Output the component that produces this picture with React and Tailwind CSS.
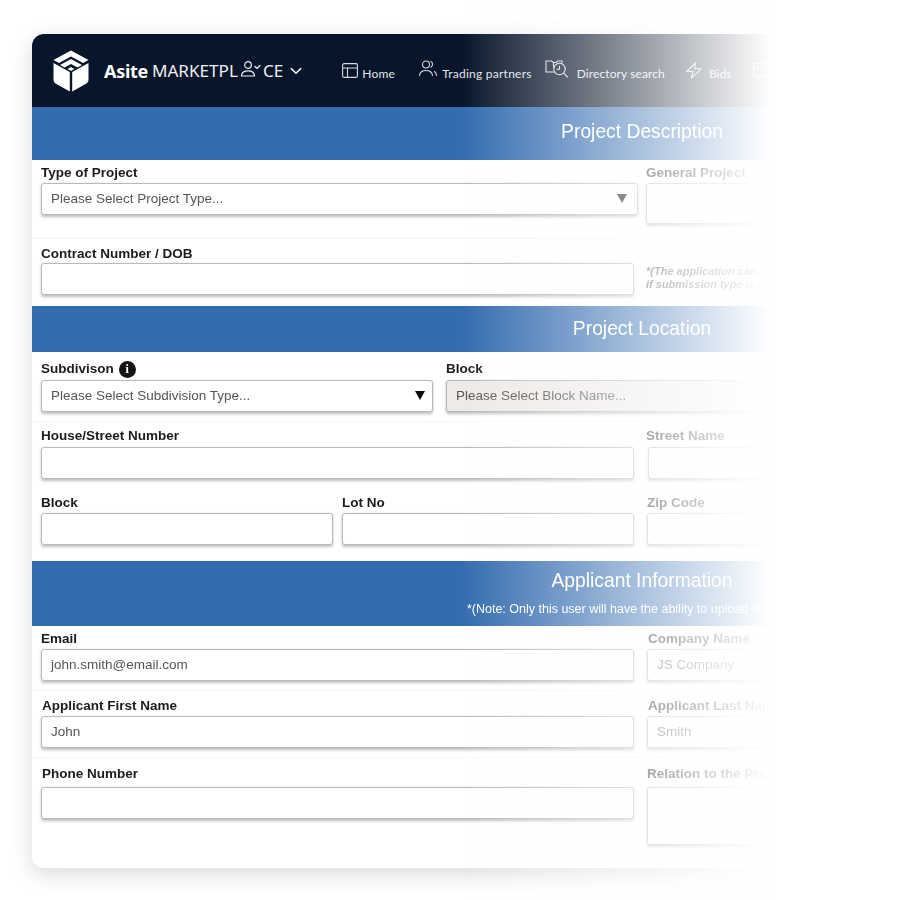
import React from "react";
import { ChevronDown } from "lucide-react";

const box = "border border-[#bababa] rounded-[3px] shadow-[0_1.5px_3px_rgba(0,0,0,0.26)] flex items-center pl-[9px] text-[13.5px] text-[#555] shrink-0";

function Label({ children, className = "" }) {
  return <div className={"h-4 leading-[18px] text-[13.5px] font-bold text-[#1c1c1c] whitespace-nowrap " + className}>{children}</div>;
}

function Field({ label, w, h = 32, gap = 3, value, arrow, extra = "bg-white", labelExtra = "", className = "" }) {
  return (
    <div className={"shrink-0 " + className} style={{ width: w }}>
      <Label className={labelExtra}>{label}</Label>
      <div className={box + " relative " + extra} style={{ height: h, marginTop: gap }}>
        {value}
        {arrow && <span className={"absolute top-[10px] w-0 h-0 border-l-[5.5px] border-r-[5.5px] border-t-[9px] border-l-transparent border-r-transparent border-t-[#0c0c0c] " + arrow} />}
      </div>
    </div>
  );
}

function Header({ h, title, note, top = 13 }) {
  return (
    <div className="bg-[#346cb0] text-white text-center flex flex-col items-center" style={{ height: h }}>
      <div className="text-[19.3px] leading-6" style={{ marginTop: top }}>{title}</div>
      {note && <div className="text-[12.5px] leading-4 mt-[8px]">{note}</div>}
    </div>
  );
}

function Logo() {
  return (
    <svg width="36" height="42" viewBox="0 0 36 42" className="shrink-0">
      <path d="M18 0.5 35.5 10 30 13 18 6.5 6 13 0.5 10Z" fill="#fff" />
      <path d="M18 9 29 15 24.5 17.5 18 14 11.500 17.500 7 15Z" fill="#fff" />
      <path d="M0.500 13 16.800 22V41.500L2.500 33.500Q0.500 32.500 0.500 30Z" fill="#fff" />
      <path d="M35.500 13 19.200 22V41.500L33.500 33.500Q35.500 32.500 35.500 30Z" fill="#fff" />
      <path d="M18 17 21.500 19 18 21 14.500 19Z" fill="#fff" />
    </svg>
  );
}

function HomeIcon() {
  return (
    <svg width="16" height="15" viewBox="0 0 16 15" fill="none" stroke="#d7dae0" strokeWidth="1.1">
      <rect x="0.600" y="0.600" width="14.800" height="13.800" rx="1.500" />
      <path d="M0.600 5H15.400M5.500 5V14.400" />
    </svg>
  );
}

function UsersIcon() {
  return (
    <svg width="20" height="20" viewBox="0 0 20 20" fill="none" stroke="#d7dae0" strokeWidth="1.1" strokeLinecap="round">
      <circle cx="8" cy="5.500" r="3.500" />
      <path d="M1.500 16.500C2 13 4.500 11.500 8 11.500S14 13 14.500 16.500" />
      <path d="M13 2.500C15 3.500 15 7 13 8.200" />
      <path d="M16.500 12.500C17.800 13.500 18.500 15 18.600 16.500" />
    </svg>
  );
}

function DirectoryIcon() {
  return (
    <svg width="25" height="20" viewBox="0 0 25 20" fill="none" stroke="#d7dae0" strokeWidth="1.1" strokeLinecap="round">
      <path d="M10 13H1V2H6.500L8.500 3.500H11" />
      <path d="M8.500 3.500V8" />
      <path d="M11 3.500 13 2H17V4" />
      <circle cx="14.500" cy="10" r="5.700" />
      <path d="M14.500 7V10.300H12" />
      <path d="M18.700 14.200 22.500 18" />
    </svg>
  );
}

function BoltIcon() {
  return (
    <svg width="16" height="17" viewBox="0 0 16 17" fill="none" stroke="#d7dae0" strokeWidth="1.1" strokeLinejoin="round">
      <path d="M9.500 0.800 0.800 9.500H7L5.500 16.200 15 6.800H8.500Z" />
    </svg>
  );
}

function DocIcon() {
  return (
    <svg width="16" height="16" viewBox="0 0 16 16" fill="none" stroke="#d7dae0" strokeWidth="1.1">
      <rect x="0.600" y="1.600" width="14.800" height="12.800" rx="1.500" />
      <path d="M0.600 5.500H15.400" />
    </svg>
  );
}

function Nav() {
  return (
    <div className="h-[73px] bg-[#08152a] flex items-center pl-[21px] shrink-0 text-white">
      <Logo />
      <span className="ml-[15px] text-[18px] font-bold tracking-[-0.3px] font-['Noto_Sans'] mt-[1px]">Asite</span>
      <span className="ml-[4px] text-[17.100px] text-[#eef0f3] font-['Noto_Sans'] mt-[1px] flex items-center whitespace-nowrap">
        MARKETPL
        <svg width="24" height="20" viewBox="0 0 22 20" fill="none" stroke="#eef0f3" strokeWidth="1.200" strokeLinecap="round" className="mt-[-2px] ml-[1px]">
          <circle cx="8" cy="5" r="3.300" />
          <path d="M1.500 16C1.500 12.500 4 10.800 8 10.800S14.500 12.500 14.500 16Z" />
          <path d="M15 6.500 17 8.500 20 5.500" />
        </svg>
        CE
      </span>
      <ChevronDown size={18} strokeWidth={2.200} className="ml-[4px] mt-[1px] text-white" />
      <div className="flex items-center font-['Lato'] text-[12px] tracking-[0.25px] text-[#e2e5ea] whitespace-nowrap">
        <span className="ml-[37px] mt-[-1px]"><HomeIcon /></span>
        <span className="ml-[4px] mt-[7px]">Home</span>
        <span className="ml-[23px] mt-[-3px]"><UsersIcon /></span>
        <span className="ml-[4px] mt-[7px]">Trading partners</span>
        <span className="ml-[13px] mt-[-3px]"><DirectoryIcon /></span>
        <span className="ml-[7px] mt-[7px] tracking-[0.1px]">Directory search</span>
        <span className="ml-[21px] mt-[-1px]"><BoltIcon /></span>
        <span className="ml-[7px] mt-[7px] tracking-[0px]">Bids</span>
        <span className="ml-[22px] mt-[-1px]"><DocIcon /></span>
      </div>
    </div>
  );
}

export default function App() {
  return (
    <div className="relative w-[900px] h-[900px] overflow-hidden bg-white font-['Liberation_Sans',Arial,sans-serif]">
      <div className="absolute left-[32px] top-[34px] w-[1220px] h-[834px] rounded-[12px] bg-white overflow-hidden shadow-[0_6px_22px_rgba(0,0,0,0.15)]">
        <div className="h-full flex flex-col blur-[0.4px]">
          <Nav />
          <Header h={53} title="Project Description" />

          <div className="h-[79px] pt-[4px] pl-[9px] flex border-b border-[#f4f4f4] shrink-0">
            <Field label="Type of Project" w={597} extra="bg-white pt-px" value="Please Select Project Type..." arrow="right-[10px]" />
            <Field label="General Project" w={300} h={41} className="ml-[8px]" />
          </div>
          <div className="h-[67px] pt-[6px] pl-[9px] flex shrink-0">
            <Field label="Contract Number / DOB" w={593} gap={2} />
            <div className="ml-[12px] mt-[20px] text-[11px] leading-[13px] font-bold italic text-[#555] whitespace-nowrap">
              <div>*(The application can only be edited</div>
              <div>if submission type is draft)</div>
            </div>
          </div>

          <Header h={46} title="Project Location" top={11} />

          <div className="h-[70px] pt-[8px] pl-[9px] flex border-b border-[#f4f4f4] shrink-0">
            <Field
              label={
                <span className="flex items-center gap-[5px]">
                  Subdivison
                  <span className="w-[17px] h-[17px] rounded-full bg-[#141414] text-white text-[12px] font-bold font-['Liberation_Serif'] flex items-center justify-center">i</span>
                </span>
              }
              w={392}
              gap={4}
              extra="bg-white pt-px"
              value="Please Select Subdivision Type..."
              arrow="right-[7px]"
            />
            <Field label="Block" w={500} gap={4} extra="bg-[#eeeae8] pt-px" className="ml-[13px]" value="Please Select Block Name..." />
          </div>

          <div className="h-[67px] pt-[5px] pl-[9px] flex shrink-0">
            <Field label="House/Street Number" w={593} gap={4} />
            <Field label="Street Name" w={300} gap={4} className="ml-[14px]" labelExtra="-ml-[2px]" />
          </div>
          <div className="h-[72px] pt-[5px] pl-[9px] flex shrink-0">
            <Field label="Block" w={292} gap={3} />
            <Field label="Lot No" w={292} gap={3} className="ml-[9px]" />
            <Field label="Zip Code" w={300} gap={3} className="ml-[13px]" />
          </div>

          <Header h={65} top={8} title="Applicant Information" note="*(Note: Only this user will have the ability to upload documents)" />

          <div className="h-[65px] pt-[4px] pl-[9px] flex border-b border-[#f4f4f4] shrink-0">
            <Field label="Email" w={593} gap={3} value="john.smith@email.com" />
            <Field label="Company Name" w={300} gap={3} className="ml-[13px]" labelExtra="ml-px" value="JS Company" />
          </div>
          <div className="h-[67px] pt-[6px] pl-[9px] flex border-b border-[#f4f4f4] shrink-0">
            <Field label="Applicant First Name" w={593} gap={3} value="John" labelExtra="pl-px" />
            <Field label="Applicant Last Name" w={300} gap={3} className="ml-[13px]" labelExtra="ml-px" value="Smith" />
          </div>
          <div className="pt-[7px] pl-[9px] flex shrink-0">
            <Field label="Phone Number" w={593} gap={6} labelExtra="pl-px" />
            <Field label="Relation to the Project" w={300} h={58} gap={6} className="ml-[13px]" />
          </div>
        </div>
      </div>
      <div className="absolute left-[460px] top-0 w-[440px] h-[900px] bg-[linear-gradient(90deg,rgba(255,255,255,0)_0px,rgba(255,255,255,1)_310px)]" />
    </div>
  );
}
